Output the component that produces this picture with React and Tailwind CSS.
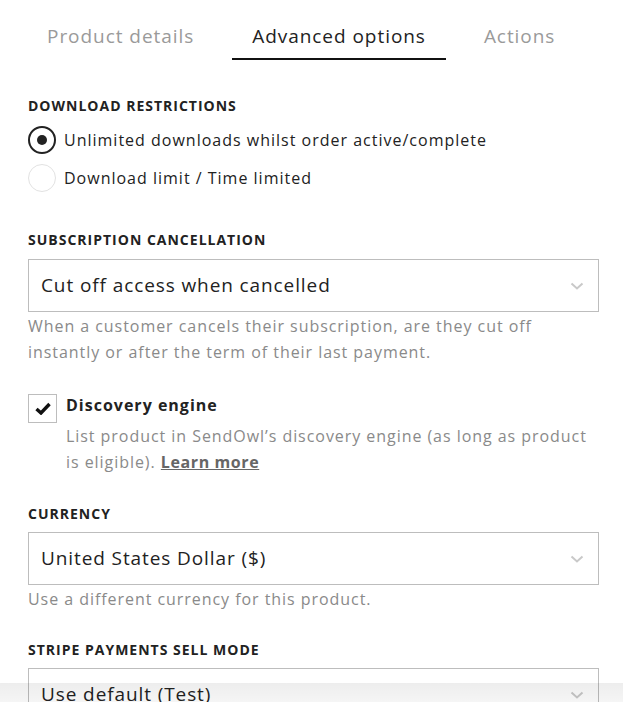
import React from 'react';

const font = { fontFamily: '"Open Sans", "Liberation Sans", sans-serif' };

const Chevron = () => (
  <svg width="14" height="8" viewBox="0 0 14 8" fill="none" aria-hidden="true">
    <path d="M1.5 1.5 L7 6.5 L12.5 1.5" stroke="#c9c9c9" strokeWidth="2" />
  </svg>
);

const Heading = ({ children, className = '' }) => (
  <h3 className={`text-[14px] leading-4 font-bold uppercase text-[#222] tracking-[1px] ${className}`}>
    {children}
  </h3>
);

const Select = ({ value, className = '' }) => (
  <div className={`flex items-center justify-between h-[53px] border border-[#bdbdbd] pl-[12px] pr-[14px] ${className}`}>
    <span className="text-[19px] text-[#222] tracking-[0.9px]">{value}</span>
    <Chevron />
  </div>
);

const Radio = ({ checked, label, className = '' }) => (
  <label className={`flex items-center gap-[8px] h-[28px] ${className}`}>
    {checked ? (
      <span className="w-[28px] h-[28px] rounded-full border-2 border-[#222] flex items-center justify-center">
        <span className="w-[10px] h-[10px] rounded-full bg-[#222]" />
      </span>
    ) : (
      <span className="w-[28px] h-[28px] rounded-full border border-[#e2e2e2]" />
    )}
    <span className="text-[16px] text-[#222] tracking-[1px]">{label}</span>
  </label>
);

export default function App() {
  const tabs = ['Product details', 'Advanced options', 'Actions'];

  return (
    <div className="relative w-[623px] h-[702px] overflow-hidden bg-white" style={font}>
      {/* Tabs */}
      <nav className="flex pl-[27px] gap-[18px]">
        {tabs.map((t) => (
          <div
            key={t}
            className={`px-[20px] pt-[24px] pb-[10px] text-[19px] leading-6 tracking-[0.95px] border-b-2 ${
              t === 'Advanced options' ? 'text-[#222] border-[#111]' : 'text-[#9a9a9a] border-transparent'
            }`}
          >
            {t}
          </div>
        ))}
      </nav>

      <div className="px-[28px] pr-[24px]">
        <Heading className="mt-[38px]">Download restrictions</Heading>
        <Radio checked label="Unlimited downloads whilst order active/complete" className="mt-[12px]" />
        <Radio label="Download limit / Time limited" className="mt-[10px]" />

        <Heading className="mt-[40px]">Subscription cancellation</Heading>
        <Select value="Cut off access when cancelled" className="mt-[11px]" />
        <p className="mt-[1px] text-[16px] leading-[26px] text-[#8a8a8a] tracking-[0.95px]">
          When a customer cancels their subscription, are they cut off
          <br />
          instantly or after the term of their last payment.
        </p>

        <div className="flex gap-[9px] mt-[29px]">
          <span className="w-[29px] h-[29px] shrink-0 border border-[#bdbdbd] flex items-center justify-center">
            <svg width="16" height="13" viewBox="0 0 16 13" aria-hidden="true">
              <path d="M1.5 7 L6 11 L14.5 2" stroke="#111" strokeWidth="3.4" fill="none" />
            </svg>
          </span>
          <div className="-mt-[1px]">
            <div className="text-[16px] leading-6 font-bold text-[#222] tracking-[1px]">Discovery engine</div>
            <p className="mt-[6px] text-[16px] leading-[26px] text-[#8a8a8a] tracking-[0.95px] whitespace-nowrap">
              List product in SendOwl’s discovery engine (as long as product
              <br />
              is eligible).{' '}
              <a className="font-bold text-[#666] underline tracking-[0.6px]">Learn more</a>
            </p>
          </div>
        </div>

        <Heading className="mt-[31px]">Currency</Heading>
        <Select value="United States Dollar ($)" className="mt-[10px]" />
        <p className="mt-[1px] text-[16px] leading-[26px] text-[#8a8a8a] tracking-[0.95px]">
          Use a different currency for this product.
        </p>

        <Heading className="mt-[30px]">Stripe payments sell mode</Heading>
        <Select value="Use default (Test)" className="mt-[10px]" />
      </div>

      {/* footer shadow */}
      <div className="absolute left-0 right-0 bottom-0 h-[19px] bg-gradient-to-b from-black/[0.07] to-black/[0.04]" />
    </div>
  );
}
